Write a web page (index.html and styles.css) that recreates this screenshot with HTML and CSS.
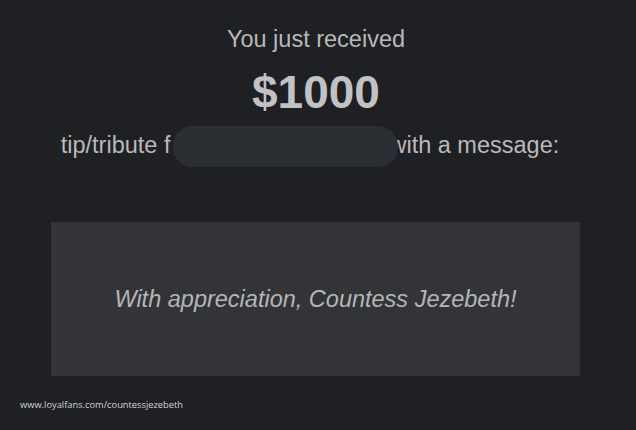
FILE: index.html
```html
<!DOCTYPE html>
<html>
<head>
  <meta charset="UTF-8">
  <title>Tip received</title>
  <link rel="stylesheet" href="styles.css">
</head>
<body>
  <div class="alerta">
    <p class="titulo">You just received</p>
    <p class="valor">$1000</p>
    <p class="linha">tip/tribute f<span class="oculto"></span>with a message:</p>
    <div class="mensagem">
      <p>With appreciation, Countess Jezebeth!</p>
    </div>
  </div>
  <p class="rodape">www.loyalfans.com/countessjezebeth</p>
</body>
</html>
```

FILE: styles.css
```css
body { margin: 0; background: #1f2023; font-family: "Liberation Sans", Arial, sans-serif; color: #b9b9bb; width: 636px; height: 430px; overflow: hidden; }
.alerta { display: flex; flex-direction: column; align-items: center; padding: 25px 4px 0 0; }
.titulo { margin: 0; font-size: 23.5px; line-height: 28px; }
.valor { margin: 13px 0 0 0; font-size: 46px; font-weight: bold; line-height: 52px; color: #c2c2c4; }
.linha { margin: 7px 12px 0 0; font-size: 23.5px; line-height: 41px; height: 41px; display: flex; align-items: center; white-space: pre; }
.oculto { position: relative; top: 1px; display: inline-block; width: 225px; height: 41px; border-radius: 20px; background: #2b2e33; margin: 0 -9px 0 3px; }
.mensagem { margin: 56px 1px 0 0; width: 529px; height: 154px; background: #333438; display: flex; align-items: center; justify-content: center; }
.mensagem p { margin: 0; font-size: 23.5px; font-style: italic; color: #b5b5b7; }
.rodape { margin: 0; padding-left: 20px; font-family: "Open Sans", sans-serif; font-size: 9.3px; color: #d4d4d4; position: absolute; top: 398px; }
```
